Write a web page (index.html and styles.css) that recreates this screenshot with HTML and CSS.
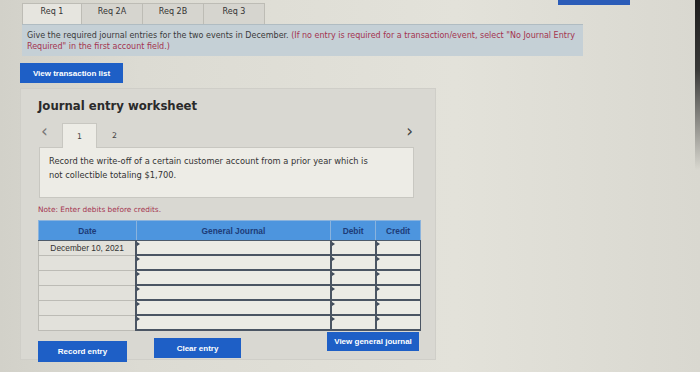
FILE: index.html
```html
<!DOCTYPE html>
<html>
<head>
<meta charset="utf-8">
<link rel="stylesheet" href="styles.css">
</head>
<body>
<div class="page">
  <div class="topbar">
    <div class="tabs">
      <div class="tab active">Req 1</div>
      <div class="tab">Req 2A</div>
      <div class="tab">Req 2B</div>
      <div class="tab">Req 3</div>
    </div>
    <div class="top-btn"></div>
  </div>
  <div class="instructions">
    <span>Give the required journal entries for the two events in December. </span><span class="red">(If no entry is required for a transaction/event, select "No Journal Entry</span><br><span class="red">Required" in the first account field.)</span>
  </div>
  <button class="btn btn-list">View transaction list</button>
  <div class="panel">
    <h2 class="title">Journal entry worksheet</h2>
    <div class="nav">
      <span class="arrow">&lsaquo;</span>
      <span class="navtab active">1</span>
      <span class="navtab">2</span>
      <span class="arrow right">&rsaquo;</span>
    </div>
    <div class="desc">Record the write-off of a certain customer account from a prior year which is not collectible totaling $1,700.</div>
    <div class="note">Note: Enter debits before credits.</div>
    <table class="journal">
      <thead>
        <tr><th class="c-date">Date</th><th class="c-gj">General Journal</th><th class="c-num">Debit</th><th class="c-num">Credit</th></tr>
      </thead>
      <tbody>
        <tr><td class="date">December 10, 2021</td><td class="in"></td><td class="in"></td><td class="in"></td></tr>
        <tr><td class="date"></td><td class="in"></td><td class="in"></td><td class="in"></td></tr>
        <tr><td class="date"></td><td class="in"></td><td class="in"></td><td class="in"></td></tr>
        <tr><td class="date"></td><td class="in"></td><td class="in"></td><td class="in"></td></tr>
        <tr><td class="date"></td><td class="in"></td><td class="in"></td><td class="in"></td></tr>
        <tr><td class="date"></td><td class="in"></td><td class="in"></td><td class="in"></td></tr>
      </tbody>
    </table>
    <div class="actions">
      <button class="btn btn-record">Record entry</button>
      <button class="btn btn-clear">Clear entry</button>
      <button class="btn btn-view">View general journal</button>
    </div>
  </div>
</div>
</body>
</html>
```

FILE: styles.css
```css
html {
  background:
    linear-gradient(to bottom, #1e1e1e 0, #3a3a38 70px, rgba(0,0,0,0) 170px) right top / 5px 100% no-repeat,
    linear-gradient(90deg, #d2d1c9 0, #dcdbd3 20%, #e3e2da 65%, #d9d8d0 100%);
}
body {
  margin: 0;
  font-family: "DejaVu Sans", Verdana, sans-serif;
  color: #333;
  width: 700px;
  height: 372px;
  overflow: hidden;
}
.page {
  padding-left: 20px;
}
.topbar {
  display: flex;
  align-items: flex-start;
  height: 24px;
}
.tabs {
  display: flex;
  margin-top: 3px;
  margin-left: 2px;
}
.tab {
  height: 21px;
  box-sizing: border-box;
  border: 1px solid #bdbcb5;
  border-bottom: none;
  border-left: none;
  background: #d6d5cf;
  font-size: 8px;
  color: #333;
  text-align: center;
  padding-top: 3px;
  width: 61px;
}
.tab:first-child { border-left: 1px solid #bdbcb5; width: 60px; }
.tab.active { background: #e6e5df; }
.top-btn {
  margin-left: auto;
  margin-right: 70px;
  width: 72px;
  height: 5px;
  background: #2b5cb8;
}
.instructions {
  margin-left: 2px;
  width: 561px;
  height: 32px;
  box-sizing: border-box;
  background: #c5d0d6;
  border-top: 1px solid #b0bcc2;
  padding: 5px 4px 0 5px;
  font-size: 8px;
  line-height: 11px;
  color: #3a3a3a;
  white-space: nowrap;
}
.red { color: #a4334f; }
.btn {
  display: block;
  border: none;
  background: #1e5fc6;
  color: #fff;
  font-family: "Liberation Sans", Arial, sans-serif;
  font-weight: bold;
  font-size: 8px;
  cursor: pointer;
  padding: 0;
}
.btn-list {
  margin-top: 7px;
  width: 103px;
  height: 20px;
}
.panel {
  margin-top: 5px;
  width: 416px;
  height: 272px;
  box-sizing: border-box;
  background: #d9d8d2;
  border: 1px solid #cfcec8;
  padding: 9px 16px 0 17px;
}
.title {
  margin: 0;
  font-size: 11.7px;
  font-weight: bold;
  color: #2a2a2a;
  line-height: 17px;
}
.nav {
  display: flex;
  align-items: flex-end;
  margin-top: 8px;
  height: 24px;
  position: relative;
  z-index: 1;
}
.arrow {
  font-size: 17px;
  line-height: 16px;
  color: #777;
  width: 21px;
  padding-left: 3px;
  align-self: flex-start;
}
.arrow.right {
  margin-left: auto;
  color: #444;
  width: auto;
  margin-right: 6px;
}
.navtab {
  width: 35px;
  height: 24px;
  box-sizing: border-box;
  text-align: center;
  font-size: 7.8px;
  padding-top: 8px;
  color: #444;
}
.navtab.active {
  background: #edece6;
  border: 1px solid #c8c7c1;
  border-bottom: none;
  height: 25px;
  margin-bottom: -1px;
}
.desc {
  width: 375px;
  height: 51px;
  box-sizing: border-box;
  background: #edece6;
  border: 1px solid #c8c7c1;
  padding: 7px 36px 0 9px;
  font-size: 8.3px;
  line-height: 13.5px;
  color: #333;
  margin-left: 1px;
}
.note {
  margin-top: 7px;
  font-size: 7.4px;
  color: #a4334f;
}
.journal {
  margin-top: 6px;
  border-collapse: collapse;
  font-family: "Liberation Sans", Arial, sans-serif;
  font-size: 8.4px;
  width: 383px;
}
.journal th {
  background: #4d95de;
  color: #1d3c78;
  font-weight: bold;
  height: 19px;
  padding: 0;
  border: 1px solid #8ab3dd;
  border-bottom: 1px solid #4d5a6a;
}
.c-date { width: 97px; }
.c-gj { width: 194px; border-right: 1px solid #4d5a6a; }
.c-num { width: 44px; }
.journal td {
  height: 13px;
  padding: 0;
}
.journal td.date {
  background: #e2e1db;
  border: 1px solid #bcbbb5;
  color: #333;
  text-align: center;
}
.journal td.in {
  background: #ecebe5;
  border: 1px solid #4b5563;
  border-width: 1px 1px 2px 2px;
  position: relative;
}
.journal td.in::before {
  content: "";
  position: absolute;
  left: 0;
  top: 1px;
  border-left: 3px solid #3f4a5a;
  border-top: 2px solid transparent;
  border-bottom: 2px solid transparent;
}
.actions {
  display: flex;
  align-items: flex-start;
  margin-top: 9px;
}
.btn-record {
  width: 91px;
  height: 21px;
  margin-top: 1px;
}
.btn-clear {
  width: 89px;
  height: 20px;
  margin-left: 27px;
  margin-top: -2px;
}
.btn-view {
  width: 94px;
  height: 19px;
  margin-left: 86px;
  margin-top: -8px;
}
```
